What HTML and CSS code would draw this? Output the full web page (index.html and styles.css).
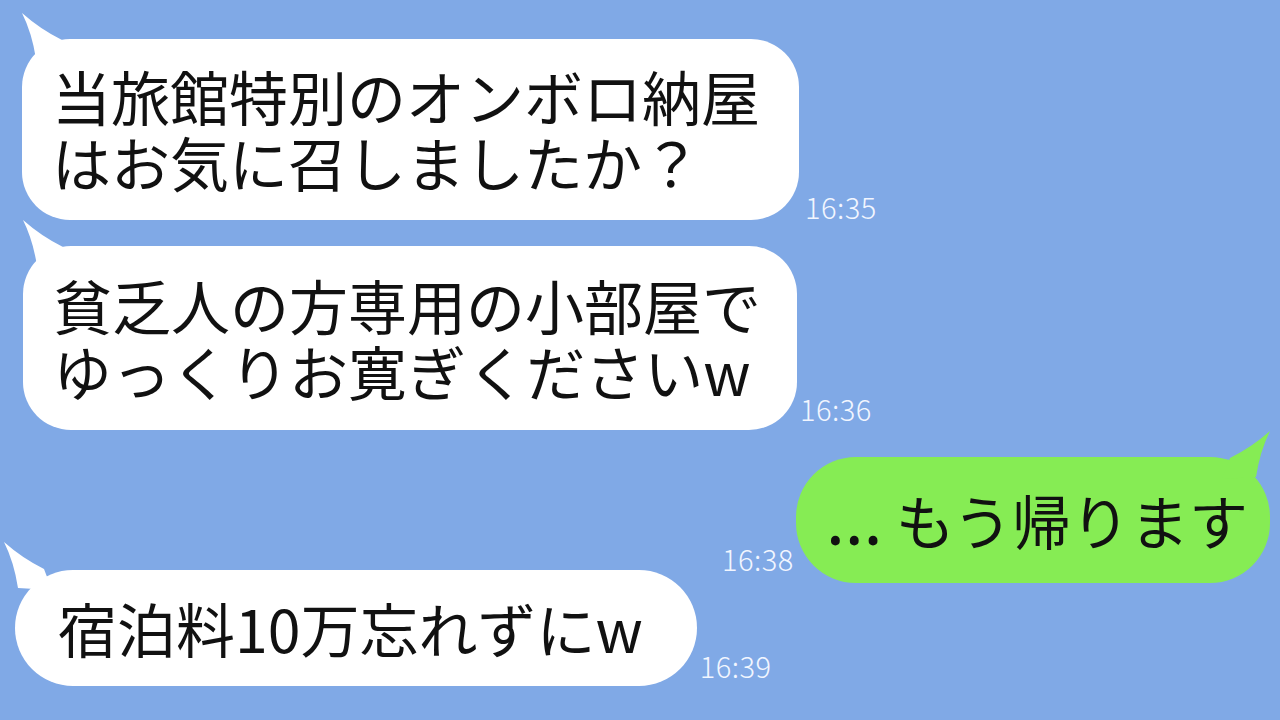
FILE: index.html
```html
<!DOCTYPE html>
<html lang="ja">
<head>
    <meta charset="UTF-8">
    <meta name="viewport" content="width=device-width, initial-scale=1.0">
    <title>トーク</title>
    <link rel="stylesheet" href="styles.css">
</head>
<body>
    <!-- トーク画面 -->
    <div class="chat">
        <!-- 相手1 -->
        <div class="row row1">
            <div class="bubble b1">
                <svg class="tail" viewBox="0 0 50 50" width="50" height="50"><path d="M2 2 Q12 22 16 48 L50 50 L42 29 Q20 18 2 2 Z"/></svg>
                <p>当旅館特別のオンボロ納屋<br>はお気に召しましたか？</p>
            </div>
            <span class="time t1">16:35</span>
        </div>
        <!-- 相手2 -->
        <div class="row row2">
            <div class="bubble b2">
                <svg class="tail" viewBox="0 0 50 50" width="50" height="50"><path d="M2 2 Q12 22 16 48 L50 50 L42 29 Q20 18 2 2 Z"/></svg>
                <p>貧乏人の方専用の小部屋で<br>ゆっくりお寛ぎくださいw</p>
            </div>
            <span class="time t2">16:36</span>
        </div>
        <!-- 自分 -->
        <div class="row row3 me">
            <span class="time t3">16:38</span>
            <div class="bubble b3">
                <svg class="tail" viewBox="0 0 50 50" width="50" height="50"><path d="M2 2 Q12 22 16 48 L50 50 L42 29 Q20 18 2 2 Z"/></svg>
                <p><span class="dots">…</span>もう帰ります</p>
            </div>
        </div>
        <!-- 相手3 -->
        <div class="row row4">
            <div class="bubble b4">
                <svg class="tail" viewBox="0 0 50 50" width="50" height="50"><path d="M2 2 Q12 22 16 48 L50 50 L42 29 Q20 18 2 2 Z"/></svg>
                <p>宿泊料10万忘れずにw</p>
            </div>
            <span class="time t4">16:39</span>
        </div>
    </div>
</body>
</html>
```

FILE: styles.css
```css
/* 清除默认样式 */
*{
    margin: 0;
    padding: 0;
}

body{
    width: 1280px;
    height: 720px;
    overflow: hidden;
    background-color: #80a9e6;
    font-family: "Noto Sans CJK JP", "Noto Sans", sans-serif;
}

.chat{
    display: flex;
    flex-direction: column;
    padding-top: 39px;
}

.row{
    display: flex;
    align-items: flex-end;
}

.row.me{
    justify-content: flex-end;
    padding-right: 10px;
}

/* 吹き出し */
.bubble{
    position: relative;
    background-color: #fff;
    border-radius: 48px;
}

.bubble p{
    font-size: 59px;
    line-height: 66px;
    color: #111;
    white-space: nowrap;
}

.bubble .tail{
    position: absolute;/*しっぽ*/
    left: -2px;
    top: -28px;
    fill: #fff;
}

.b3{
    background-color: #86ec54;
    border-radius: 60px;
}

.b3 .tail{
    fill: #86ec54;
    left: auto;
    right: -2px;
    transform: scaleX(-1);
}

.b4{
    border-radius: 58px;
}

.b4 .tail{
    left: -13px;
    top: -30px;
}

.dots{
    font-family: "Noto Sans", sans-serif;
    font-size: 72px;
    line-height: 0;
    margin-right: 13px;
}

.row1{
    padding-left: 22px;
}

.b1{
    padding: 24px 39px 25px 30px;
}

.row2{
    padding-left: 23px;
    margin-top: 26px;
}

.b2{
    padding: 26px 36px 26px 30px;
}

.row3{
    margin-top: 27px;
}

.b3{
    padding: 30px 22px 30px 30px;
}

.row4{
    padding-left: 15px;
    margin-top: -13px;
}

.b4{
    padding: 25px 54px 25px 43px;
}

/* 時刻 */
.time{
    font-size: 29px;
    line-height: 1;
    font-weight: 300;
    letter-spacing: 0.5px;
    color: #f2f6ff;
}

.t1{
    margin-left: 6px;
    margin-bottom: -1px;
}

.t2{
    margin-left: 3px;
    margin-bottom: 7px;
}

.t3{
    margin-right: 2px;
    margin-bottom: 10px;
}

.t4{
    margin-left: 3px;
    margin-bottom: 6px;
}
```
